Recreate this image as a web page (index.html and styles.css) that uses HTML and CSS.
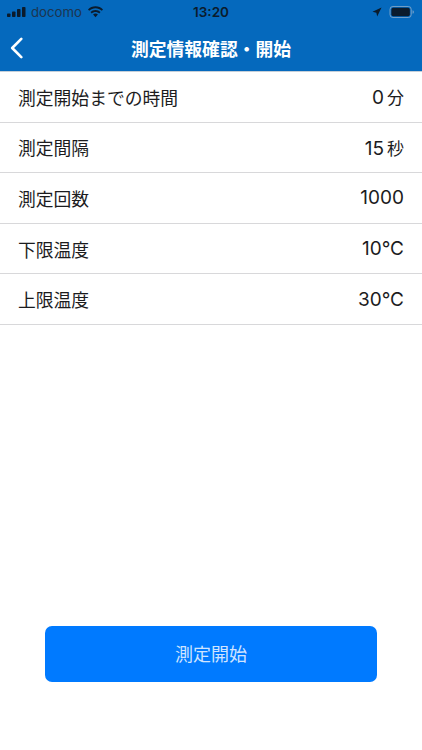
FILE: index.html
```html
<!DOCTYPE html>
<html lang="ja">
<head>
<meta charset="utf-8">
<title>測定情報確認・開始</title>
<link rel="stylesheet" href="styles.css">
</head>
<body>
<div class="screen">
  <header class="header">
    <div class="status">
      <div class="status-left">
        <svg class="signal" width="19" height="10" viewBox="0 0 19 10"><rect x="0" y="6.500" width="3.500" height="3.500" rx=".8"/><rect x="5" y="4.500" width="3.500" height="5.500" rx=".8"/><rect x="10" y="2" width="3.500" height="8" rx=".8"/><rect x="15" y="0" width="3.500" height="10" rx=".8"/></svg>
        <span class="carrier">docomo</span>
        <svg class="wifi" width="17" height="12" viewBox="0 0 17 12"><path d="M8.500 2.200c2.400 0 4.600.9 6.300 2.500L16 3.400C14 1.400 11.400.2 8.500.2S3 1.400 1 3.400l1.200 1.300C3.900 3.100 6.100 2.200 8.500 2.200z"/><path d="M8.500 5.900c1.400 0 2.700.5 3.700 1.500l1.300-1.300c-1.300-1.300-3.100-2.100-5-2.100s-3.700.8-5 2.100l1.300 1.300c1-1 2.300-1.500 3.700-1.500z"/><path d="M8.500 7.600c-.9 0-1.800.4-2.400 1l2.400 2.600 2.400-2.600c-.6-.6-1.500-1-2.400-1z"/></svg>
      </div>
      <div class="time">13:20</div>
      <div class="status-right">
        <svg class="arrow" width="10" height="10" viewBox="0 0 11 11"><path d="M10.500.5 5.700 10.500 4.800 6.200.5 5.300z"/></svg>
        <svg class="battery" width="26" height="12" viewBox="0 0 27 13"><rect class="shell" x=".5" y=".5" width="23" height="12" rx="3.200"/><rect x="2" y="2" width="20" height="9" rx="2"/><path class="nub" d="M25 4.500c.8.300 1.300 1.100 1.300 2s-.5 1.700-1.300 2z"/></svg>
      </div>
    </div>
    <div class="nav">
      <svg class="back" width="13" height="22" viewBox="0 0 13 22"><path d="M11.300 1.800 2.200 11l9.100 9.200"/></svg>
      <h1 class="title">測定情報確認・開始</h1>
    </div>
  </header>
  <ul class="list">
    <li class="row"><span>測定開始までの時間</span><span class="value">0<span class="unit">分</span></span></li>
    <li class="row"><span>測定間隔</span><span class="value">15<span class="unit">秒</span></span></li>
    <li class="row"><span>測定回数</span><span class="value">1000</span></li>
    <li class="row"><span>下限温度</span><span class="value">10°C</span></li>
    <li class="row"><span>上限温度</span><span class="value">30°C</span></li>
  </ul>
  <div class="footer"><button class="start" type="button">測定開始</button></div>
</div>
</body>
</html>
```
FILE: styles.css
```css
* { box-sizing: border-box; }
html, body { margin: 0; padding: 0; height: 100%; background: #fff; }
body { font-family: Inter, "Liberation Sans", "Noto Sans CJK JP", sans-serif; color: #1c1c1e; }
.screen { width: 422px; height: 750px; display: flex; flex-direction: column; overflow: hidden; }
.header { background: #0569bd; color: #fff; height: 72px; border-bottom: 1px solid #c5cfd8; flex: none; }
.status { height: 24px; padding: 0 7px; display: grid; grid-template-columns: 1fr auto 1fr; align-items: center; font-size: 13.500px; color: #0b1b2c; }
.status-left { display: flex; align-items: center; gap: 5px; }
.status-right { display: flex; align-items: center; justify-content: flex-end; gap: 7px; }
.carrier { color: #1c3550; font-size: 13.200px; }
.time { font-weight: 600; font-size: 13.500px; }
.status svg { fill: #0b1b2c; display: block; }
.status .battery .shell { fill: none; stroke: #7fa5c9; }
.status .battery .nub { fill: #7fa5c9; }
.nav { height: 47px; display: flex; align-items: center; justify-content: center; position: relative; }
.back { position: absolute; left: 10px; top: 13px; fill: none; stroke: #fff; stroke-width: 2.600; stroke-linecap: round; stroke-linejoin: round; }
.title { margin: 0; font-size: 17.800px; font-weight: 600; }
.list { list-style: none; margin: 0; padding: 0; }
.row { height: 50.600px; padding: 0 18px; display: flex; justify-content: space-between; align-items: center; border-bottom: 1px solid #d8d8da; font-size: 17.800px; }
.value { font-size: 19px; }
.unit { font-size: 17px; margin-left: 3px; }
.footer { margin-top: auto; padding: 0 45px 68px; }
.start { width: 100%; height: 56px; padding: 0 0 3px; border: 0; border-radius: 7px; background: #007aff; color: #cfe4ff; font: inherit; font-size: 18px; display: block; }
```
